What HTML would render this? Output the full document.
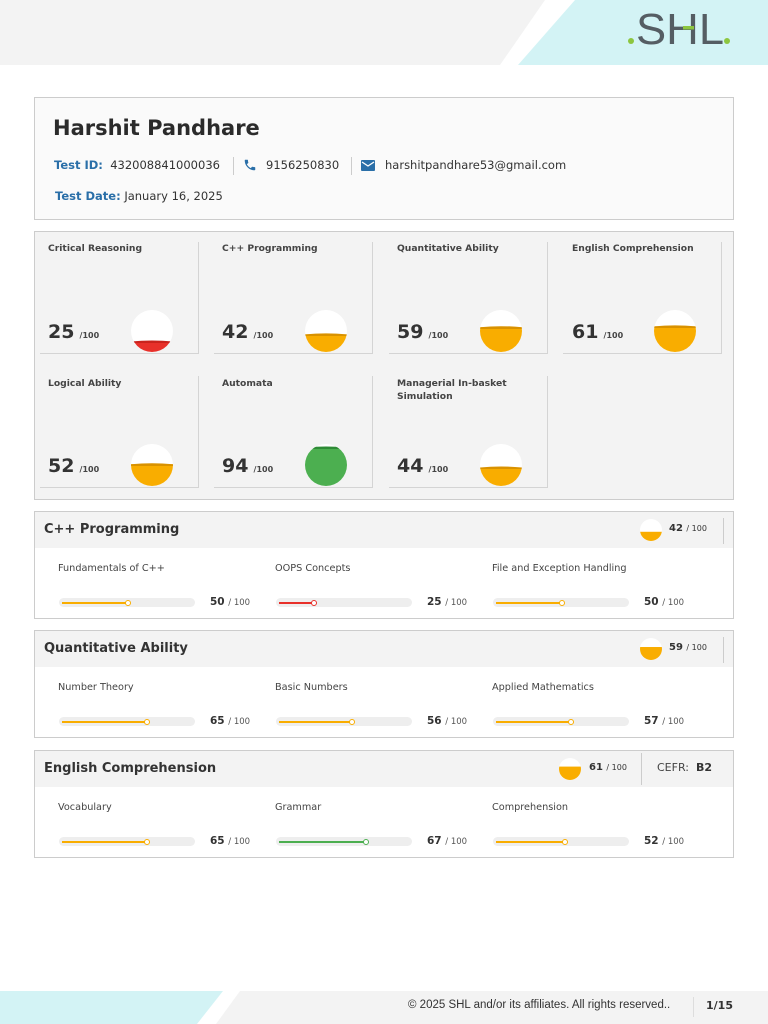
<!DOCTYPE html>
<html><head><meta charset="utf-8"><style>
*{margin:0;padding:0;box-sizing:border-box}
body{width:768px;height:1024px;position:relative;background:#fff;font-family:"DejaVu Sans","Liberation Sans",sans-serif;color:#333;overflow:hidden}
.abs{position:absolute}
.t{font-size:9.2px;font-weight:bold;color:#444;line-height:13px}
.big{font-size:19px;font-weight:bold;color:#333}
.sm{font-size:8px;color:#444;font-weight:bold}
.cell{position:absolute;width:159px;height:112px;border-right:1px solid #d4d4d4;border-bottom:1px solid #d4d4d4}
.sec{position:absolute;left:34px;width:700px;height:108px;border:1px solid #ccc;background:#fff}
.sh{height:36px;background:#f3f3f3;position:relative}
.sh .ti{position:absolute;left:9px;top:10px;font-size:13px;font-weight:bold;color:#333}
.lab{position:absolute;top:51px;font-size:9.7px;color:#444}
.track{position:absolute;top:86px;width:136px;height:9px;border-radius:5px;background:#eee}
.fill{position:absolute;left:3px;top:3.5px;height:2px}
.dot{position:absolute;top:1.5px;width:6px;height:6px;border-radius:50%;background:#fff;border:1.5px solid}
.sc{position:absolute;top:84px;font-size:10.5px;font-weight:bold;color:#333}
.sc span{font-size:8.5px;font-weight:normal;color:#555}
</style></head><body>
<!-- header -->
<div class="abs" style="left:0;top:0;width:768px;height:65px;background:#f3f3f3"></div>
<svg class="abs" style="left:0;top:0" width="768" height="65"><polygon points="545,0 768,0 768,65 500,65" fill="#fff"/><polygon points="575,0 768,0 768,65 518,65" fill="#d3f3f5"/>
<text x="636" y="44" font-family="Liberation Sans, sans-serif" font-size="44" fill="#555d63" textLength="88" lengthAdjust="spacingAndGlyphs">SHL</text>
<rect x="683" y="26" width="11" height="3.5" fill="#8cc63f"/>
<circle cx="631" cy="41" r="3" fill="#8cc63f"/><circle cx="727" cy="41" r="3" fill="#8cc63f"/></svg>

<!-- info card -->
<div class="abs" style="left:34px;top:97px;width:700px;height:123px;background:#fafafa;border:1px solid #ccc"></div>
<div class="abs" style="left:53px;top:116px;font-size:21px;font-weight:bold;color:#2b2b2b">Harshit Pandhare</div>
<div class="abs" style="left:54px;top:158px;font-size:11.5px;color:#333;white-space:nowrap"><b style="color:#2a6fa8">Test ID:</b>&nbsp; 432008841000036</div>
<div class="abs" style="left:233px;top:157px;width:1px;height:18px;background:#ccc"></div>
<svg class="abs" style="left:243px;top:158px" width="14" height="14" viewBox="0 0 24 24"><path d="M6.6 10.8c1.4 2.8 3.8 5.1 6.6 6.6l2.2-2.2c.3-.3.7-.4 1-.2 1.1.4 2.3.6 3.6.6.6 0 1 .4 1 1V20c0 .6-.4 1-1 1C10.6 21 3 13.4 3 4c0-.6.4-1 1-1h3.5c.6 0 1 .4 1 1 0 1.3.2 2.5.6 3.6.1.3 0 .7-.2 1z" fill="#2a6fa8"/></svg>
<div class="abs" style="left:266px;top:158px;font-size:11.5px;color:#333">9156250830</div>
<div class="abs" style="left:351px;top:157px;width:1px;height:18px;background:#ccc"></div>
<svg class="abs" style="left:361px;top:160px" width="14" height="11" viewBox="0 0 14 11"><rect width="14" height="11" rx="1" fill="#2a6fa8"/><path d="M1 2l6 4 6-4" stroke="#fff" stroke-width="1.3" fill="none"/></svg>
<div class="abs" style="left:385px;top:158px;font-size:11.5px;color:#333">harshitpandhare53@gmail.com</div>
<div class="abs" style="left:55px;top:189px;font-size:11.5px;color:#333"><b style="color:#2a6fa8">Test Date:</b> January 16, 2025</div>

<!-- score grid -->
<div class="abs" style="left:34px;top:231px;width:700px;height:269px;background:#f3f3f3;border:1px solid #ccc"></div>
<div class="cell" style="left:40px;top:242px"></div>
<div class="cell" style="left:214px;top:242px"></div>
<div class="cell" style="left:389px;top:242px"></div>
<div class="cell" style="left:563px;top:242px"></div>
<div class="cell" style="left:40px;top:376px"></div>
<div class="cell" style="left:214px;top:376px"></div>
<div class="cell" style="left:389px;top:376px"></div>
<div class="abs t" style="left:48px;top:242px">Critical Reasoning</div>
<div class="abs t" style="left:222px;top:242px">C++ Programming</div>
<div class="abs t" style="left:397px;top:242px">Quantitative Ability</div>
<div class="abs t" style="left:572px;top:242px">English Comprehension</div>
<div class="abs t" style="left:48px;top:377px">Logical Ability</div>
<div class="abs t" style="left:222px;top:377px">Automata</div>
<div class="abs t" style="left:397px;top:377px">Managerial In-basket<br>Simulation</div>

<div class="abs" style="left:48px;top:321px"><span class="big">25</span> <span class="sm">/100</span></div>
<div class="abs" style="left:222px;top:321px"><span class="big">42</span> <span class="sm">/100</span></div>
<div class="abs" style="left:397px;top:321px"><span class="big">59</span> <span class="sm">/100</span></div>
<div class="abs" style="left:572px;top:321px"><span class="big">61</span> <span class="sm">/100</span></div>
<div class="abs" style="left:48px;top:455px"><span class="big">52</span> <span class="sm">/100</span></div>
<div class="abs" style="left:222px;top:455px"><span class="big">94</span> <span class="sm">/100</span></div>
<div class="abs" style="left:397px;top:455px"><span class="big">44</span> <span class="sm">/100</span></div>

<svg width="0" height="0" style="position:absolute"><defs><clipPath id="c"><circle cx="21" cy="21" r="21"/></clipPath></defs></svg>
<svg class="abs" style="left:131px;top:310px" width="42" height="42"><circle cx="21" cy="21" r="21" fill="#fff"/><g clip-path="url(#c)"><rect y="31.5" width="42" height="11" fill="#e8302a"/><path d="M0 31.5Q21 29.5 42 31.5V33H0z" fill="#c9231d"/></g></svg>
<svg class="abs" style="left:305px;top:310px" width="42" height="42"><circle cx="21" cy="21" r="21" fill="#fff"/><g clip-path="url(#c)"><rect y="24.4" width="42" height="18" fill="#f9ad00"/><path d="M0 24.4Q21 22.4 42 24.4V26H0z" fill="#d99200"/></g></svg>
<svg class="abs" style="left:480px;top:310px" width="42" height="42"><circle cx="21" cy="21" r="21" fill="#fff"/><g clip-path="url(#c)"><rect y="17.2" width="42" height="25" fill="#f9ad00"/><path d="M0 17.2Q21 15.2 42 17.2V19H0z" fill="#d99200"/></g></svg>
<svg class="abs" style="left:654px;top:310px" width="42" height="42"><circle cx="21" cy="21" r="21" fill="#fff"/><g clip-path="url(#c)"><rect y="16.4" width="42" height="26" fill="#f9ad00"/><path d="M0 16.4Q21 14.4 42 16.4V18H0z" fill="#d99200"/></g></svg>
<svg class="abs" style="left:131px;top:444px" width="42" height="42"><circle cx="21" cy="21" r="21" fill="#fff"/><g clip-path="url(#c)"><rect y="20.2" width="42" height="22" fill="#f9ad00"/><path d="M0 20.2Q21 18.2 42 20.2V22H0z" fill="#d99200"/></g></svg>
<svg class="abs" style="left:305px;top:444px" width="42" height="42"><circle cx="21" cy="21" r="21" fill="#fff"/><g clip-path="url(#c)"><rect y="3.5" width="42" height="39" fill="#4caf50"/><path d="M0 3.5Q21 1.5 42 3.5V5H0z" fill="#2e8b36"/></g></svg>
<svg class="abs" style="left:480px;top:444px" width="42" height="42"><circle cx="21" cy="21" r="21" fill="#fff"/><g clip-path="url(#c)"><rect y="23.5" width="42" height="19" fill="#f9ad00"/><path d="M0 23.5Q21 21.5 42 23.5V25H0z" fill="#d99200"/></g></svg>

<!-- section 1 -->
<div class="sec" style="top:511px"><div class="sh"><div class="ti">C++ Programming</div>
<svg class="abs" style="left:605px;top:7px" width="22" height="22" viewBox="0 0 42 42"><circle cx="21" cy="21" r="21" fill="#fff"/><g clip-path="url(#c)"><rect y="24.4" width="42" height="18" fill="#f9ad00"/></g></svg>
<div class="abs" style="left:634px;top:11px;font-size:10px;font-weight:bold">42 <span style="font-size:8px;font-weight:normal">/ 100</span></div>
<div class="abs" style="left:688px;top:6px;width:1px;height:26px;background:#ccc"></div></div>
<div class="lab" style="left:23px">Fundamentals of C++</div><div class="lab" style="left:240px">OOPS Concepts</div><div class="lab" style="left:457px">File and Exception Handling</div>
<div class="track" style="left:24px"><div class="fill" style="width:66px;background:#f9ad00"></div><div class="dot" style="left:66px;border-color:#f9ad00"></div></div>
<div class="track" style="left:241px"><div class="fill" style="width:34px;background:#e8302a"></div><div class="dot" style="left:35px;border-color:#e8302a"></div></div>
<div class="track" style="left:458px"><div class="fill" style="width:66px;background:#f9ad00"></div><div class="dot" style="left:66px;border-color:#f9ad00"></div></div>
<div class="sc" style="left:175px">50 <span>/ 100</span></div><div class="sc" style="left:392px">25 <span>/ 100</span></div><div class="sc" style="left:609px">50 <span>/ 100</span></div>
</div>

<!-- section 2 -->
<div class="sec" style="top:630px"><div class="sh"><div class="ti">Quantitative Ability</div>
<svg class="abs" style="left:605px;top:7px" width="22" height="22" viewBox="0 0 42 42"><circle cx="21" cy="21" r="21" fill="#fff"/><g clip-path="url(#c)"><rect y="17.2" width="42" height="25" fill="#f9ad00"/></g></svg>
<div class="abs" style="left:634px;top:11px;font-size:10px;font-weight:bold">59 <span style="font-size:8px;font-weight:normal">/ 100</span></div>
<div class="abs" style="left:688px;top:6px;width:1px;height:26px;background:#ccc"></div></div>
<div class="lab" style="left:23px">Number Theory</div><div class="lab" style="left:240px">Basic Numbers</div><div class="lab" style="left:457px">Applied Mathematics</div>
<div class="track" style="left:24px"><div class="fill" style="width:85px;background:#f9ad00"></div><div class="dot" style="left:85px;border-color:#f9ad00"></div></div>
<div class="track" style="left:241px"><div class="fill" style="width:73px;background:#f9ad00"></div><div class="dot" style="left:73px;border-color:#f9ad00"></div></div>
<div class="track" style="left:458px"><div class="fill" style="width:75px;background:#f9ad00"></div><div class="dot" style="left:75px;border-color:#f9ad00"></div></div>
<div class="sc" style="left:175px">65 <span>/ 100</span></div><div class="sc" style="left:392px">56 <span>/ 100</span></div><div class="sc" style="left:609px">57 <span>/ 100</span></div>
</div>

<!-- section 3 -->
<div class="sec" style="top:750px"><div class="sh"><div class="ti">English Comprehension</div>
<svg class="abs" style="left:524px;top:7px" width="22" height="22" viewBox="0 0 42 42"><circle cx="21" cy="21" r="21" fill="#fff"/><g clip-path="url(#c)"><rect y="16.4" width="42" height="26" fill="#f9ad00"/></g></svg>
<div class="abs" style="left:554px;top:11px;font-size:10px;font-weight:bold">61 <span style="font-size:8px;font-weight:normal">/ 100</span></div>
<div class="abs" style="left:606px;top:2px;width:1px;height:32px;background:#ccc"></div>
<div class="abs" style="left:622px;top:10px;font-size:11px;color:#444">CEFR:&nbsp; <b style="color:#333">B2</b></div></div>
<div class="lab" style="left:23px">Vocabulary</div><div class="lab" style="left:240px">Grammar</div><div class="lab" style="left:457px">Comprehension</div>
<div class="track" style="left:24px"><div class="fill" style="width:85px;background:#f9ad00"></div><div class="dot" style="left:85px;border-color:#f9ad00"></div></div>
<div class="track" style="left:241px"><div class="fill" style="width:87px;background:#4caf50"></div><div class="dot" style="left:87px;border-color:#4caf50"></div></div>
<div class="track" style="left:458px"><div class="fill" style="width:69px;background:#f9ad00"></div><div class="dot" style="left:69px;border-color:#f9ad00"></div></div>
<div class="sc" style="left:175px">65 <span>/ 100</span></div><div class="sc" style="left:392px">67 <span>/ 100</span></div><div class="sc" style="left:609px">52 <span>/ 100</span></div>
</div>

<!-- footer -->
<div class="abs" style="left:0;top:991px;width:768px;height:33px;background:#f3f3f3"></div>
<svg class="abs" style="left:0;top:991px" width="768" height="33"><polygon points="0,0 240,0 216,33 0,33" fill="#fff"/><polygon points="0,0 223,0 197,33 0,33" fill="#d3f3f5"/></svg>
<div class="abs" style="left:408px;top:999px;font-size:11.5px;color:#333;font-family:'Liberation Sans',sans-serif;white-space:nowrap">© 2025 SHL and/or its affiliates. All rights reserved..</div>
<div class="abs" style="left:693px;top:997px;width:1px;height:20px;background:#ddd"></div>
<div class="abs" style="left:706px;top:999px;font-size:11px;font-weight:bold;color:#333">1/15</div>
</body></html>
